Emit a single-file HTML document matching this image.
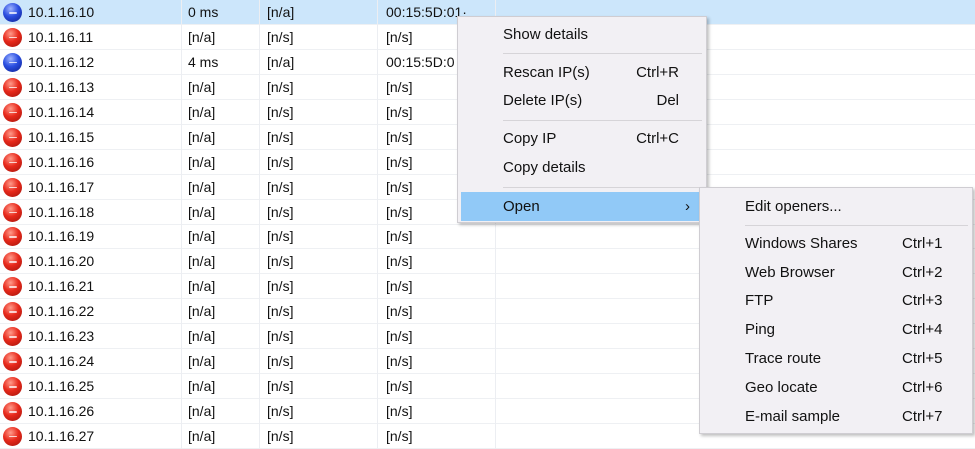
<!DOCTYPE html>
<html><head><style>
*{margin:0;padding:0;box-sizing:border-box}
body{width:975px;height:436px;overflow:hidden;background:#fff;font-family:"Liberation Sans",sans-serif;font-size:14px;color:#111;position:relative}
.row{position:absolute;left:0;width:975px;height:25px;border-bottom:1px solid #eef0f3}
.row.sel{background:#cce6fb}
.c{position:absolute;top:0;height:25px;line-height:24px;border-right:1px solid #eceef2}
.ic{position:absolute;left:3px;top:3px;width:19px;height:19px;border-radius:50%}
.red{background:radial-gradient(circle at 40% 30%,#ff9a8a 0,#e8291b 45%,#a0120a 100%)}
.blue{background:radial-gradient(circle at 40% 30%,#9fb4ff 0,#2a4ee0 45%,#0c1d8c 100%)}
.ic:after{content:"";position:absolute;left:6px;top:9px;width:8px;height:1.5px;background:#fff;border-radius:1px;opacity:.75}
.menu{position:absolute;background:#f2f0f4;border:1px solid #cfcdd2;box-shadow:2px 2px 3px rgba(0,0,0,.25);font-size:15px}
.mi{position:absolute;left:0;right:0;height:28px;line-height:28px}
.mi .t{position:absolute}
.mi .k{position:absolute;text-align:right}
.sep{position:absolute;height:1px;background:#d6d4d8}
</style></head><body>
<div id="g"></div>
<script>
var rows=[["10.1.16.10","0 ms","[n/a]","00:15:5D:01·",1],["10.1.16.11"],["10.1.16.12","4 ms","[n/a]","00:15:5D:0",1]];
for(var i=13;i<=27;i++)rows.push(["10.1.16."+i]);
var h="";
rows.forEach(function(r,i){
var b=r[4];var y=i*24.94;
h+='<div class="row'+(i==0?' sel':'')+'" style="top:'+y+'px">'+
'<div class="c" style="left:0;width:182px"><span class="ic '+(b?'blue':'red')+'"></span><span style="position:absolute;left:28px">'+r[0]+'</span></div>'+
'<div class="c" style="left:182px;width:78px;padding-left:6px">'+(r[1]||'[n/a]')+'</div>'+
'<div class="c" style="left:260px;width:118px;padding-left:7px">'+(r[2]||'[n/s]')+'</div>'+
'<div class="c" style="left:378px;width:118px;padding-left:8px">'+(r[3]||'[n/s]')+'</div></div>';
});
document.getElementById('g').innerHTML=h;
</script>
<div class="menu" style="left:457px;top:16px;width:250px;height:207px">
<div class="mi" style="top:4px"><span class="t" style="left:45px">Show details</span></div>
<div class="sep" style="left:45px;right:4px;top:36px"></div>
<div class="mi" style="top:42px"><span class="t" style="left:45px">Rescan IP(s)</span><span class="k" style="right:27px">Ctrl+R</span></div>
<div class="mi" style="top:70px"><span class="t" style="left:45px">Delete IP(s)</span><span class="k" style="right:27px">Del</span></div>
<div class="sep" style="left:45px;right:4px;top:103px"></div>
<div class="mi" style="top:108px"><span class="t" style="left:45px">Copy IP</span><span class="k" style="right:27px">Ctrl+C</span></div>
<div class="mi" style="top:137px"><span class="t" style="left:45px">Copy details</span></div>
<div class="sep" style="left:45px;right:4px;top:170px"></div>
<div class="mi" style="top:175px;left:3px;right:6px;height:29px;line-height:29px;background:#91c9f7"><span class="t" style="left:42px">Open</span><span class="k" style="right:10px">›</span></div>
</div>
<div class="menu" style="left:699px;top:187px;width:274px;height:247px">
<div class="mi" style="top:5px"><span class="t" style="left:45px">Edit openers...</span></div>
<div class="sep" style="left:45px;right:4px;top:37px"></div>
<div class="mi" style="top:42px"><span class="t" style="left:45px">Windows Shares</span><span class="k" style="left:202px">Ctrl+1</span></div>
<div class="mi" style="top:71px"><span class="t" style="left:45px">Web Browser</span><span class="k" style="left:202px">Ctrl+2</span></div>
<div class="mi" style="top:99px"><span class="t" style="left:45px">FTP</span><span class="k" style="left:202px">Ctrl+3</span></div>
<div class="mi" style="top:128px"><span class="t" style="left:45px">Ping</span><span class="k" style="left:202px">Ctrl+4</span></div>
<div class="mi" style="top:157px"><span class="t" style="left:45px">Trace route</span><span class="k" style="left:202px">Ctrl+5</span></div>
<div class="mi" style="top:186px"><span class="t" style="left:45px">Geo locate</span><span class="k" style="left:202px">Ctrl+6</span></div>
<div class="mi" style="top:215px"><span class="t" style="left:45px">E-mail sample</span><span class="k" style="left:202px">Ctrl+7</span></div>
</div>
</body></html>
